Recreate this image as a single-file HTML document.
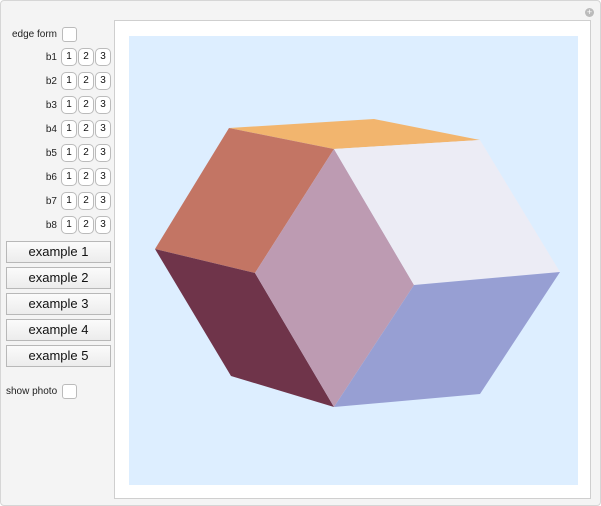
<!DOCTYPE html>
<html><head><style>
body{margin:0;width:601px;height:506px;background:#fff;font-family:"Liberation Sans",sans-serif;position:relative;overflow:hidden}
.frame{position:absolute;left:0;top:0;width:599px;height:504px;background:#f4f4f4;border:1px solid #d6d6d6;border-radius:4px}
.lbl{position:absolute;font-size:10px;color:#222;text-align:right}
.cb{position:absolute;width:13px;height:13px;border:1px solid #bbb;border-radius:3px;background:#fff}
.seg{position:absolute;left:61px;height:17px;display:flex}
.seg span{width:14px;height:16px;border:1px solid #bbb;border-radius:5px;background:#fff;font-size:10px;line-height:16px;text-align:center;margin-right:1px;color:#111}
.btn{position:absolute;left:6px;width:103px;height:20px;border:1px solid #b8b8b8;background:linear-gradient(#fbfbfb,#ececec);font-size:13px;line-height:20px;text-align:center;color:#111}
.plot{position:absolute;left:114px;top:20px;width:475px;height:477px;background:#fff;border:1px solid #cfcfcf}
.plus{position:absolute;left:585px;top:8px;width:9px;height:9px;border-radius:50%;background:#bbb;color:#fff;font-size:9px;line-height:9px;text-align:center}
</style></head><body>
<div class="frame"></div>
<div class="plus">+</div>
<div class="lbl" style="left:10px;top:29px;width:47px">edge form</div>
<div class="cb" style="left:62px;top:27px"></div>
<div class="lbl" style="left:30px;top:52px;width:27px">b1</div><div class="seg" style="top:48px"><span>1</span><span>2</span><span>3</span></div>
<div class="lbl" style="left:30px;top:76px;width:27px">b2</div><div class="seg" style="top:72px"><span>1</span><span>2</span><span>3</span></div>
<div class="lbl" style="left:30px;top:100px;width:27px">b3</div><div class="seg" style="top:96px"><span>1</span><span>2</span><span>3</span></div>
<div class="lbl" style="left:30px;top:124px;width:27px">b4</div><div class="seg" style="top:120px"><span>1</span><span>2</span><span>3</span></div>
<div class="lbl" style="left:30px;top:148px;width:27px">b5</div><div class="seg" style="top:144px"><span>1</span><span>2</span><span>3</span></div>
<div class="lbl" style="left:30px;top:172px;width:27px">b6</div><div class="seg" style="top:168px"><span>1</span><span>2</span><span>3</span></div>
<div class="lbl" style="left:30px;top:196px;width:27px">b7</div><div class="seg" style="top:192px"><span>1</span><span>2</span><span>3</span></div>
<div class="lbl" style="left:30px;top:220px;width:27px">b8</div><div class="seg" style="top:216px"><span>1</span><span>2</span><span>3</span></div>
<div class="btn" style="top:241px">example 1</div>
<div class="btn" style="top:267px">example 2</div>
<div class="btn" style="top:293px">example 3</div>
<div class="btn" style="top:319px">example 4</div>
<div class="btn" style="top:345px">example 5</div>
<div class="lbl" style="left:6px;top:386px;text-align:left">show photo</div>
<div class="cb" style="left:62px;top:384px"></div>
<div class="plot"></div>
<svg style="position:absolute;left:0;top:0" width="601" height="506">
<rect x="129" y="36" width="449" height="449" fill="#ddeeff"/>
<polygon points="229,128 374,119 480,140 334,149" fill="#f2b56e"/>
<polygon points="229,128 334,149 255,273 155,249" fill="#c37564"/>
<polygon points="155,249 255,273 334,407 231,376" fill="#6f344a"/>
<polygon points="334,149 414,285 334,407 255,273" fill="#bd9bb2"/>
<polygon points="334,149 480,140 560,272 414,285" fill="#ececf5"/>
<polygon points="414,285 560,272 480,394 334,407" fill="#979fd3"/>
</svg>
</body></html>
